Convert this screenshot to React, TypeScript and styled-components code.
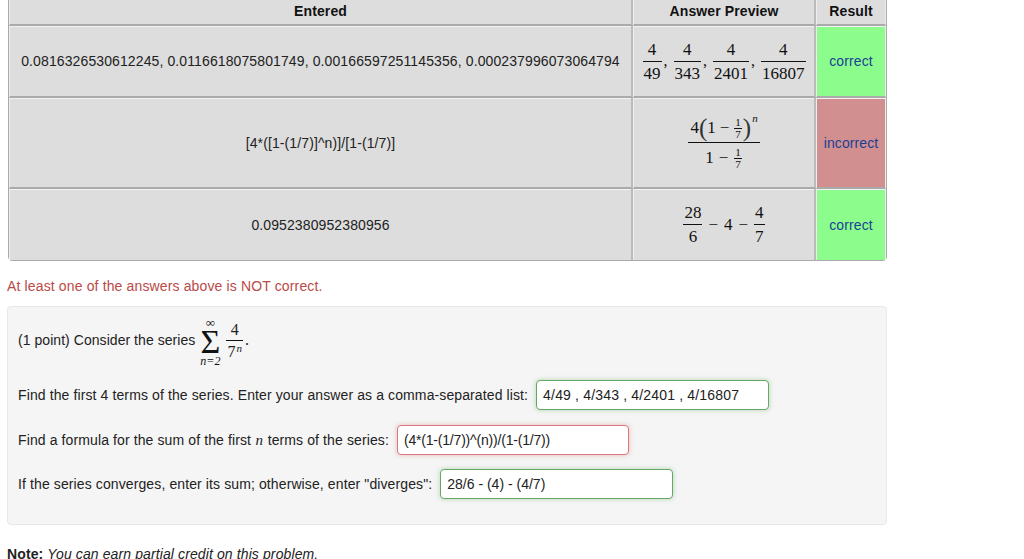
import React from 'react';
import styled, { createGlobalStyle } from 'styled-components';

const GlobalStyle = createGlobalStyle`
  html, body {
    margin: 0;
    padding: 0;
    height: 559px;
    overflow: hidden;
    background: #fff;
  }
  body {
    font-family: "Liberation Sans", Arial, sans-serif;
    font-size: 14px;
    letter-spacing: 0.11px;
    color: #222;
  }
`;

const Page = styled.div`
  width: 880px;
  margin-left: 7px;
`;

const ResultsTable = styled.table`
  width: 879px;
  margin-left: 1px;
  table-layout: fixed;
  border-collapse: separate;
  border-spacing: 0;
  margin-top: -4px;
  border: 1px solid #aaa;
  border-radius: 4px;
  background: #fff;
`;

const Head = styled.th`
  height: 27px;
  padding: 0;
  background: #ddd;
  color: #111;
  font-size: 14px;
  font-weight: bold;
  text-align: center;
  vertical-align: middle;
  border-right: 2px solid #bbb;
  border-bottom: 2px solid #aaa;
  border-left: 1px solid #eee;

  &:last-child {
    border-right: 1px solid #eee;
  }
`;

const Cell = styled.td<{ $h: number }>`
  height: ${(p) => p.$h}px;
  padding: 0;
  background: #ddd;
  color: #222;
  text-align: center;
  vertical-align: middle;
  border-right: 2px solid #bbb;
  border-bottom: 2px solid #aaa;
  border-left: 1px solid #eee;
  box-shadow: inset 0 1px 0 #f2f2f2;

  tr:last-child > & {
    border-bottom: 0;
  }
`;

const ResultCell = styled(Cell)<{ $ok: boolean }>`
  background: ${(p) => (p.$ok ? '#8cfd8c' : '#d18f8f')};
  color: #1b3f95;
  border-right: 1px solid #eee;
`;

const Math = styled.span`
  display: inline-flex;
  align-items: center;
  font-family: "Liberation Serif", "Times New Roman", serif;
  font-size: 17px;
  letter-spacing: 0;
  color: #111;
`;

const TermsMath = styled(Math)`
  padding-top: 2px;
`;

const Frac = styled.span`
  display: inline-flex;
  flex-direction: column;
  align-items: center;
  line-height: 20px;
`;

const Num = styled.span`
  display: block;
  padding: 0 1px 1px;
`;

const Den = styled.span`
  display: block;
  align-self: stretch;
  text-align: center;
  border-top: 1px solid #111;
  padding: 2px 1px 0;
`;

const Comma = styled.span`
  align-self: flex-end;
  margin: 0 6px 18px 2px;
  line-height: 10px;
  font-size: 16px;
`;

const Op = styled.span<{ $gap: number }>`
  margin: 0 ${(p) => p.$gap}px;
`;

const SmallFrac = styled(Frac)`
  font-size: 11px;
  line-height: 11px;
  margin: 0 1px;
`;

const SmallNum = styled.span`
  padding: 0 1px;
`;

const SmallDen = styled.span`
  align-self: stretch;
  text-align: center;
  border-top: 1px solid #111;
  padding: 0 1px;
`;

const Paren = styled.span`
  font-size: 25px;
  font-weight: 100;
  line-height: 26px;
  color: #333;
`;

const PowerN = styled.span`
  align-self: flex-start;
  font-size: 11px;
  font-style: italic;
  line-height: 12px;
  margin-left: 1px;
`;

const RaisedN = styled(PowerN)`
  margin-top: -3px;
`;

const BigFrac = styled.span`
  display: inline-flex;
  flex-direction: column;
  align-items: center;
`;

const BigNum = styled.span`
  display: inline-flex;
  align-items: center;
  height: 30px;
  padding: 3px 2px 0;
  box-sizing: border-box;
`;

const BigDen = styled.span`
  display: inline-flex;
  align-items: center;
  justify-content: center;
  align-self: stretch;
  height: 31px;
  border-top: 1px solid #111;
`;

const Warning = styled.p`
  margin: 0;
  padding-top: 15px;
  line-height: 20px;
  color: #b94a48;
  font-size: 14px;
  letter-spacing: 0.14px;
`;

const Problem = styled.div`
  margin-top: 10px;
  height: 219px;
  box-sizing: border-box;
  padding: 8px 10px 0;
  background: #f5f5f5;
  border: 1px solid #e8e8e8;
  border-radius: 4px;
  line-height: 20px;
`;

const Intro = styled.div`
  display: flex;
  align-items: center;
  height: 50px;
  letter-spacing: 0.05px;
`;

const Sigma = styled.span`
  display: inline-flex;
  flex-direction: column;
  align-items: center;
  margin: 4px 6px 0 5px;
  font-family: "Liberation Serif", "Times New Roman", serif;
  letter-spacing: 0;
  color: #111;
`;

const SigmaMark = styled.span`
  font-size: 34px;
  line-height: 27px;
`;

const Limit = styled.span`
  font-size: 13px;
  line-height: 11px;
`;

const LimitLow = styled.span`
  font-size: 12px;
  line-height: 13px;
  font-style: italic;
`;

const SeriesFrac = styled(Frac)`
  font-family: "Liberation Serif", "Times New Roman", serif;
  font-size: 16px;
  line-height: 19px;
  letter-spacing: 0;
`;

const SeriesDen = styled(Den)`
  display: flex;
  justify-content: center;
  padding: 1px 1px 0;
`;

const Dot = styled.span`
  font-family: "Liberation Serif", "Times New Roman", serif;
  font-size: 16px;
  margin-left: 2px;
`;

const Line = styled.div<{ $top: number }>`
  display: flex;
  align-items: center;
  margin-top: ${(p) => p.$top}px;
  height: 30px;
  white-space: pre;
`;

const Answer = styled.div<{ $ok: boolean; $w: number; $spacing: number }>`
  box-sizing: border-box;
  width: ${(p) => p.$w}px;
  height: 30px;
  margin-left: 8px;
  padding: 0 6px;
  line-height: 28px;
  letter-spacing: ${(p) => p.$spacing}px;
  background: #fff;
  color: #222;
  border: 1px solid ${(p) => (p.$ok ? '#64a864' : '#d9777b')};
  border-radius: 4px;
  box-shadow: 0 0 5px ${(p) => (p.$ok ? 'rgba(100,170,100,.45)' : 'rgba(215,110,110,.45)')};
`;

const Var = styled.i`
  font-family: "Liberation Serif", "Times New Roman", serif;
  font-size: 15px;
  margin: 0 0.5px;
`;

const Note = styled.p`
  margin: 0;
  padding-top: 19px;
  line-height: 20px;
  color: #222;
`;

const NoteText = styled.em`
  font-style: italic;
`;

export default function App() {
  const terms = ['49', '343', '2401', '16807'];
  return (
    <Page>
      <GlobalStyle />
      <ResultsTable>
        <colgroup>
          <col style={{ width: 624 }} />
          <col style={{ width: 183 }} />
          <col />
        </colgroup>
        <thead>
          <tr>
            <Head>Entered</Head>
            <Head>Answer Preview</Head>
            <Head>Result</Head>
          </tr>
        </thead>
        <tbody>
          <tr>
            <Cell $h={70}>0.0816326530612245, 0.0116618075801749, 0.00166597251145356, 0.000237996073064794</Cell>
            <Cell $h={70}>
              <TermsMath>
                {terms.map((t, i) => (
                  <React.Fragment key={t}>
                    <Frac>
                      <Num>4</Num>
                      <Den>{t}</Den>
                    </Frac>
                    {i < terms.length - 1 && <Comma>,</Comma>}
                  </React.Fragment>
                ))}
              </TermsMath>
            </Cell>
            <ResultCell $h={70} $ok>correct</ResultCell>
          </tr>
          <tr>
            <Cell $h={89}>[4*([1-(1/7)]^n)]/[1-(1/7)]</Cell>
            <Cell $h={89}>
              <Math>
                <BigFrac>
                  <BigNum>
                    4<Paren>(</Paren>1<Op $gap={4}>−</Op>
                    <SmallFrac>
                      <SmallNum>1</SmallNum>
                      <SmallDen>7</SmallDen>
                    </SmallFrac>
                    <Paren>)</Paren>
                    <RaisedN>n</RaisedN>
                  </BigNum>
                  <BigDen>
                    1<Op $gap={5}>−</Op>
                    <SmallFrac>
                      <SmallNum>1</SmallNum>
                      <SmallDen>7</SmallDen>
                    </SmallFrac>
                  </BigDen>
                </BigFrac>
              </Math>
            </Cell>
            <ResultCell $h={89} $ok={false}>incorrect</ResultCell>
          </tr>
          <tr>
            <Cell $h={71}>0.0952380952380956</Cell>
            <Cell $h={71}>
              <Math>
                <Frac>
                  <Num>28</Num>
                  <Den>6</Den>
                </Frac>
                <Op $gap={6}>−</Op>4<Op $gap={6}>−</Op>
                <Frac>
                  <Num>4</Num>
                  <Den>7</Den>
                </Frac>
              </Math>
            </Cell>
            <ResultCell $h={71} $ok>correct</ResultCell>
          </tr>
        </tbody>
      </ResultsTable>

      <Warning>At least one of the answers above is NOT correct.</Warning>

      <Problem>
        <Intro>
          (1 point) Consider the series
          <Sigma>
            <Limit>∞</Limit>
            <SigmaMark>Σ</SigmaMark>
            <LimitLow>n=2</LimitLow>
          </Sigma>
          <SeriesFrac>
            <Num>4</Num>
            <SeriesDen>
              7<PowerN>n</PowerN>
            </SeriesDen>
          </SeriesFrac>
          <Dot>.</Dot>
        </Intro>
        <Line $top={15}>
          Find the first 4 terms of the series. Enter your answer as a comma-separated list:
          <Answer $ok $w={233} $spacing={0.17}>4/49 , 4/343 , 4/2401 , 4/16807</Answer>
        </Line>
        <Line $top={15}>
          Find a formula for the sum of the first <Var>n</Var> terms of the series:
          <Answer $ok={false} $w={232} $spacing={-0.19}>(4*(1-(1/7))^(n))/(1-(1/7))</Answer>
        </Line>
        <Line $top={14}>
          If the series converges, enter its sum; otherwise, enter "diverges":
          <Answer $ok $w={233} $spacing={0}>28/6 - (4) - (4/7)</Answer>
        </Line>
      </Problem>

      <Note>
        <strong>Note:</strong> <NoteText>You can earn partial credit on this problem.</NoteText>
      </Note>
    </Page>
  );
}
